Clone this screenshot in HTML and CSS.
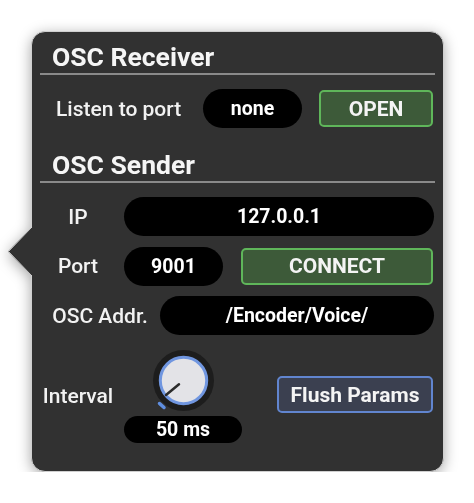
FILE: index.html
```html
<!DOCTYPE html>
<html>
<head>
<meta charset="utf-8">
<link rel="stylesheet" href="styles.css">
</head>
<body>
<div class="popover">
  <svg class="arrow" width="27" height="47" viewBox="0 0 27 47">
    <polygon points="23,0 0,23.5 23,47 27,47 27,0" fill="#313131"/>
    <path d="M23,0 L0.5,23.5 L23,47" fill="none" stroke="#c6c6c6" stroke-width="1"/>
  </svg>
  <h2 class="section-title">OSC Receiver</h2>
  <div class="row row-listen">
    <span class="label label-listen">Listen to port</span>
    <span class="pill pill-short">none</span>
    <button class="btn btn-green btn-open">OPEN</button>
  </div>
  <h2 class="section-title section-sender">OSC Sender</h2>
  <div class="fields">
    <div class="row">
      <span class="label label-col">IP</span>
      <span class="pill pill-wide">127.0.0.1</span>
    </div>
    <div class="row">
      <span class="label label-col">Port</span>
      <span class="pill pill-short">9001</span>
      <button class="btn btn-green btn-connect">CONNECT</button>
    </div>
    <div class="row">
      <span class="label label-addr">OSC Addr.</span>
      <span class="pill pill-wide">/Encoder/Voice/</span>
    </div>
  </div>
  <div class="row row-interval">
    <span class="label label-col label-interval">Interval</span>
    <div class="knob-col">
      <svg class="knob" width="61" height="61" viewBox="0 0 61 61">
        <circle cx="30.5" cy="30.5" r="30.5" fill="#1d1d1d"/>
        <circle cx="30.5" cy="30.5" r="23.2" fill="#e3e3e7" stroke="#7096e0" stroke-width="3"/>
        <line x1="26" y1="34.2" x2="13" y2="45" stroke="#2b2b2b" stroke-width="2.5" stroke-linecap="round"/>
        <line x1="6.5" y1="53.5" x2="11" y2="57.5" stroke="#5f8ee0" stroke-width="3.5" stroke-linecap="round"/>
      </svg>
      <span class="pill pill-value">50 ms</span>
    </div>
    <button class="btn btn-blue btn-flush">Flush Params</button>
  </div>
</div>
</body>
</html>
```

FILE: styles.css
```css
body {
  margin: 0;
  background: #ffffff;
  font-family: Roboto, "Liberation Sans", sans-serif;
}

.popover {
  position: relative;
  box-sizing: border-box;
  width: 413px;
  margin: 31px 0 0 31px;
  padding: 9px 8px 28px;
  background: #313131;
  border: 1px solid #cfcfcf;
  border-radius: 14px;
  filter: drop-shadow(0 3px 7px rgba(0, 0, 0, 0.35));
  color: #f2f2f2;
}

.arrow {
  position: absolute;
  left: -24px;
  top: 196px;
  overflow: visible;
}

.section-title {
  margin: 0;
  padding-left: 12px;
  font-size: 26.5px;
  font-weight: 700;
  line-height: 32px;
  color: #f5f5f5;
  border-bottom: 2px solid #8a8a8a;
}

.section-sender {
  margin-top: 21px;
}

.row {
  display: flex;
  align-items: center;
}

.row-listen {
  margin-top: 14px;
  padding-left: 16px;
  height: 39px;
}

.label {
  font-size: 21px;
  font-weight: 500;
  line-height: 24px;
  white-space: nowrap;
}

.label-listen {
  width: 147px;
}

.label-col {
  width: 76px;
  margin-right: 8px;
  text-align: center;
}

.label-addr {
  width: 120px;
  text-align: center;
}

.label-interval {
  margin-bottom: 2px;
}

.pill {
  display: flex;
  align-items: center;
  justify-content: center;
  height: 39px;
  background: #000000;
  border-radius: 20px;
  font-size: 19.5px;
  font-weight: 700;
  color: #ffffff;
}

.pill-short {
  width: 99px;
}

.pill-wide {
  flex: 1;
  margin-right: 1px;
}

.pill-value {
  width: 118px;
  height: 27px;
  border-radius: 14px;
}

.btn {
  box-sizing: border-box;
  height: 37px;
  padding: 0;
  border: 2px solid;
  border-radius: 5px;
  font-family: Roboto, "Liberation Sans", sans-serif;
  font-size: 21px;
  font-weight: 700;
  color: #f4f4f4;
}

.btn-green {
  background: #3d5a39;
  border-color: #5fb65a;
}

.btn-blue {
  background: #3b4050;
  border-color: #6185cf;
}

.btn-open {
  width: 114px;
  margin-left: 17px;
}

.btn-connect {
  width: 192px;
  margin-left: 18px;
}

.btn-flush {
  width: 156px;
  margin-left: 35px;
  margin-bottom: 4px;
}

.fields {
  display: flex;
  flex-direction: column;
  gap: 10.5px;
  margin-top: 14px;
}

.row-interval {
  margin-top: 15px;
}

.knob-col {
  display: flex;
  flex-direction: column;
  align-items: center;
  gap: 5px;
  width: 118px;
}

.knob {
  display: block;
  overflow: visible;
}
```
